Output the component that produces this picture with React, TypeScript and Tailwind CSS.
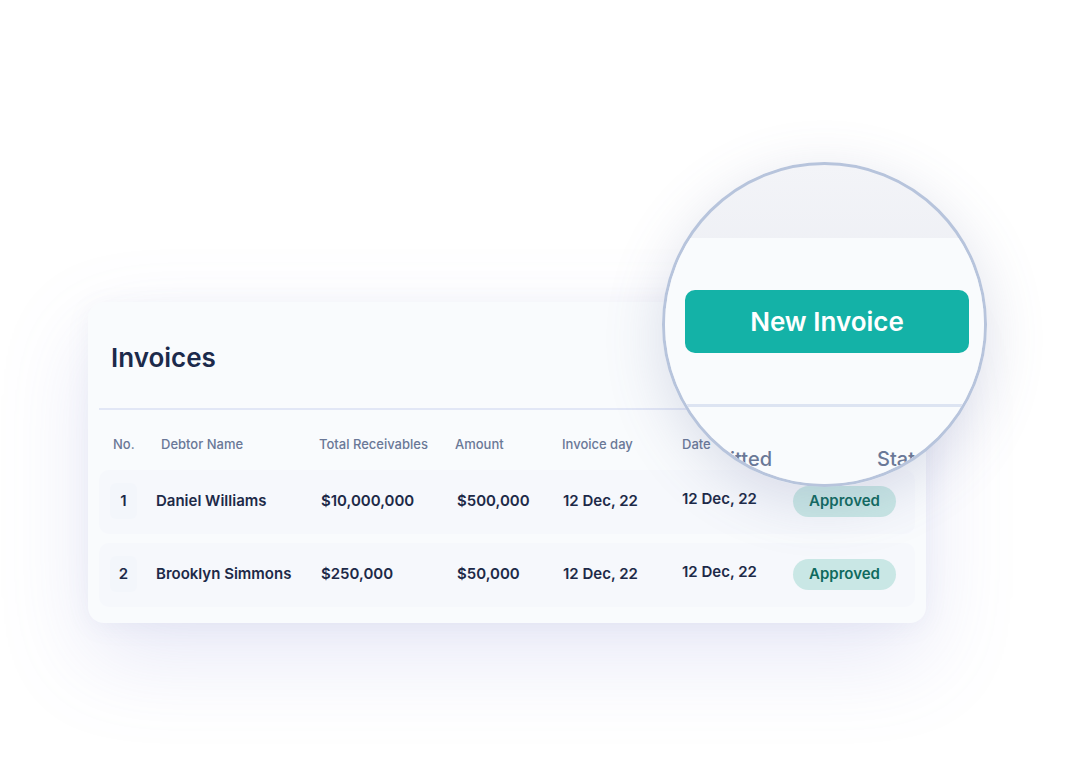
import React from "react";

const rows = [
  { no: "1", name: "Daniel Williams", total: "$10,000,000", amount: "$500,000", day: "12 Dec, 22", date: "12 Dec, 22" },
  { no: "2", name: "Brooklyn Simmons", total: "$250,000", amount: "$50,000", day: "12 Dec, 22", date: "12 Dec, 22" },
];

export default function App() {
  return (
    <div className="relative w-[1080px] h-[768px] overflow-hidden bg-white font-['Inter',sans-serif]">
      <div className="pt-[302px] pl-[88px]">
        <div className="w-[838px] rounded-[16px] bg-[#f9fbfd] px-[11px] pt-[40px] pb-[16px] shadow-[0_34px_90px_rgba(110,120,210,0.17),0_4px_24px_rgba(120,130,170,0.07)]">
          <h1 className="pl-[12px] text-[26px] leading-8 font-semibold text-[#1c2a4b]">Invoices</h1>
          <div className="mt-[34px] h-[2px] bg-[#e2e7f6]" />
          <div className="grid grid-cols-[48px_158px_136px_107px_120px_1fr] pl-[14px] pt-[26px] pb-[18px] text-[13px] leading-4 font-medium text-[#6a7897]">
            <div>No.</div>
            <div>Debtor Name</div>
            <div>Total Receivables</div>
            <div>Amount</div>
            <div>Invoice day</div>
            <div>Date</div>
          </div>
          <div className="flex flex-col gap-[9px]">
            {rows.map((r) => (
              <div
                key={r.no}
                className="grid h-[64px] grid-cols-[57px_165px_136px_106px_119px_111px_1fr] items-center rounded-[10px] bg-[#f6f8fc] pb-[2px] text-[15px] font-semibold text-[#1d2a48]"
              >
                <div className="pl-[11px]">
                  <div className="flex h-[36px] w-[27px] items-center justify-center rounded-[6px] bg-[#f3f6fb]">{r.no}</div>
                </div>
                <div>{r.name}</div>
                <div>{r.total}</div>
                <div>{r.amount}</div>
                <div>{r.day}</div>
                <div className="-translate-y-[2px]">{r.date}</div>
                <div>
                  <span className="flex h-[31px] w-[103px] items-center justify-center rounded-full bg-[#c9e7e5] text-[15px] font-semibold text-[#0f6a5e]">
                    Approved
                  </span>
                </div>
              </div>
            ))}
          </div>
        </div>
      </div>

      {/* magnifier lens */}
      <div className="absolute left-[662px] top-[162px] h-[325px] w-[325px] overflow-hidden rounded-full border-[3px] border-[#b7c4dc] bg-gradient-to-b from-[#f3f4f8] to-[#e3e6ee] shadow-[0_14px_60px_rgba(90,100,150,0.2)]">
        <div className="absolute left-[-40px] right-[-40px] top-[73px] bottom-[-40px] bg-[#f9fbfd]" />
        <div className="absolute left-[20px] top-[125px] flex h-[63px] w-[284px] items-center justify-center rounded-[10px] bg-[#14b2a7] text-[26px] font-semibold text-white">
          New Invoice
        </div>
        <div className="absolute left-[-10px] right-[-10px] top-[239px] h-[3px] bg-[#dde4f2]" />
        <div className="absolute right-[212px] top-[282px] whitespace-nowrap text-right text-[20px] leading-6 font-medium text-[#6a7897]">
          Date Submitted
        </div>
        <div className="absolute left-[212px] top-[282px] whitespace-nowrap text-[20px] leading-6 font-medium text-[#6a7897]">
          Status
        </div>
      </div>
    </div>
  );
}
